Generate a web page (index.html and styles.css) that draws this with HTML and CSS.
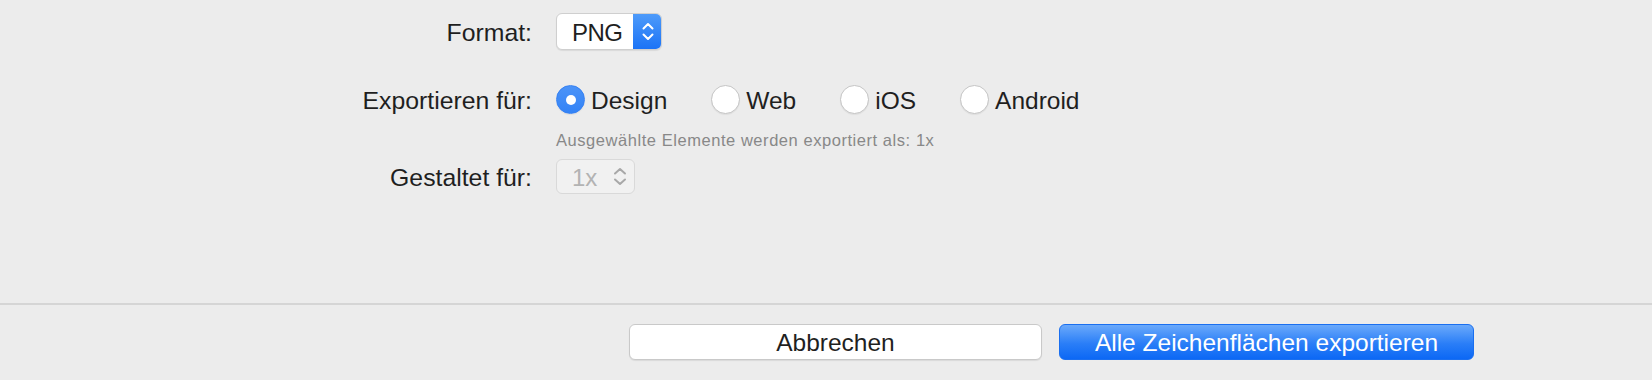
FILE: index.html
```html
<!DOCTYPE html>
<html lang="de">
<head>
    <meta charset="UTF-8">
    <meta name="viewport" content="width=device-width, initial-scale=1.0">
    <title>Exportieren</title>
    <link rel="stylesheet" href="styles.css">
</head>
<body>
    <div class="export-dialog">
        <!-- Settings -->
        <div class="export-settings">
            <div class="row row-format">
                <label class="row-label">Format:</label>
                <div class="popup">
                    <span class="popup-value">PNG</span>
                    <span class="popup-arrows">
                        <svg width="12" height="19" viewBox="0 0 12 19">
                            <path d="M1.5 6.5 L6 2 L10.5 6.5" fill="none" stroke="#fff" stroke-width="2" stroke-linecap="round" stroke-linejoin="round"/>
                            <path d="M1.5 12.5 L6 17 L10.5 12.5" fill="none" stroke="#fff" stroke-width="2" stroke-linecap="round" stroke-linejoin="round"/>
                        </svg>
                    </span>
                </div>
            </div>

            <div class="row row-export">
                <label class="row-label">Exportieren für:</label>
                <div class="radio-group">
                    <label class="radio"><span class="radio-dot checked"></span><span class="radio-text">Design</span></label>
                    <label class="radio"><span class="radio-dot"></span><span class="radio-text">Web</span></label>
                    <label class="radio"><span class="radio-dot"></span><span class="radio-text">iOS</span></label>
                    <label class="radio"><span class="radio-dot"></span><span class="radio-text">Android</span></label>
                </div>
            </div>

            <div class="row row-hint">
                <span></span>
                <p class="hint">Ausgewählte Elemente werden exportiert als: 1x</p>
            </div>

            <div class="row row-design">
                <label class="row-label">Gestaltet für:</label>
                <div class="stepper disabled">
                    <span class="stepper-value">1x</span>
                    <svg width="14" height="19" viewBox="0 0 14 19">
                        <path d="M2 6.5 L7 2 L12 6.5" fill="none" stroke="#a8a8a8" stroke-width="2" stroke-linecap="round" stroke-linejoin="round"/>
                        <path d="M2 12.5 L7 17 L12 12.5" fill="none" stroke="#a8a8a8" stroke-width="2" stroke-linecap="round" stroke-linejoin="round"/>
                    </svg>
                </div>
            </div>
        </div>

        <!-- Footer buttons -->
        <div class="export-footer">
            <button class="btn btn-cancel">Abbrechen</button>
            <button class="btn btn-primary">Alle Zeichenflächen exportieren</button>
        </div>
    </div>
</body>
</html>
```

FILE: styles.css
```css
body {
    font-family: "Liberation Sans", Arial, sans-serif;
    margin: 0;
    padding: 0;
    background-color: #ececec;
    color: #1f1f1f;
}

.export-dialog {
    display: flex;
    flex-direction: column;
    height: 380px;
}

.export-settings {
    flex: 1;
    padding-top: 13px;
}

.row {
    display: grid;
    grid-template-columns: 532px auto;
    column-gap: 24px;
    align-items: center;
}

.row-label {
    text-align: right;
    font-size: 24.8px;
    padding-top: 3px;
    white-space: nowrap;
}

.row-export {
    margin-top: 34px;
}

.row-hint {
    margin-top: 16px;
}

.row-design {
    margin-top: 10px;
}

/* Format popup */
.popup {
    display: flex;
    width: 106px;
    height: 37px;
    box-sizing: border-box;
    background-color: #fff;
    border: 1px solid #cfcfcf;
    border-radius: 6px;
    box-shadow: 0 1px 1px rgba(0, 0, 0, 0.08);
    overflow: hidden;
}

.popup-value {
    flex: 1;
    display: flex;
    align-items: center;
    padding: 2px 0 0 15px;
    font-size: 24px;
    letter-spacing: -0.5px;
}

.popup-arrows {
    width: 29px;
    display: flex;
    align-items: center;
    justify-content: center;
    background: linear-gradient(#4f9cfa, #1a72f6);
    margin: -1px -1px -1px 0;
}

/* Radios */
.radio-group {
    display: flex;
    align-items: center;
    gap: 44px;
    height: 29px;
}

.radio {
    display: flex;
    align-items: center;
    gap: 6px;
    font-size: 24.5px;
}

.radio-text {
    padding-top: 3px;
}

.radio-dot {
    width: 29px;
    height: 29px;
    box-sizing: border-box;
    border-radius: 50%;
    background-color: #fff;
    border: 1px solid #c4c4c4;
    box-shadow: 0 1px 1px rgba(0, 0, 0, 0.06);
    display: flex;
    align-items: center;
    justify-content: center;
}

.radio-dot.checked {
    background: linear-gradient(#4b93f8, #3383f6);
    border-color: #3580f2;
}

.radio-dot.checked::after {
    content: "";
    width: 10px;
    height: 10px;
    border-radius: 50%;
    background-color: #fff;
}

.hint {
    margin: 0;
    font-size: 16.5px;
    letter-spacing: 0.55px;
    line-height: 18px;
    color: #888;
}

/* Disabled stepper */
.stepper {
    display: flex;
    align-items: center;
    justify-content: space-between;
    width: 79px;
    height: 35px;
    box-sizing: border-box;
    padding: 0 7px 0 15px;
    background-color: #f1f1f1;
    border: 1px solid #d9d9d9;
    border-radius: 6px;
}

.stepper-value {
    font-size: 24px;
    padding-top: 2px;
    color: #b3b3b3;
}

/* Footer */
.export-footer {
    display: flex;
    justify-content: flex-end;
    gap: 17px;
    height: 77px;
    box-sizing: border-box;
    padding: 19px 178px 20px 0;
    border-top: 2px solid #d5d5d5;
}

.btn {
    height: 36px;
    padding-top: 3px;
    font-family: "Liberation Sans", Arial, sans-serif;
    font-size: 24.5px;
    border-radius: 6px;
    cursor: pointer;
}

.btn-cancel {
    width: 413px;
    background-color: #fff;
    color: #1f1f1f;
    border: 1px solid #c9c9c9;
    box-shadow: 0 1px 1px rgba(0, 0, 0, 0.08);
}

.btn-primary {
    width: 415px;
    color: #fff;
    border: 1px solid #1a6ff0;
    background: linear-gradient(#6aa9fb, #2a7ef7 55%, #0c68f5);
}
```
